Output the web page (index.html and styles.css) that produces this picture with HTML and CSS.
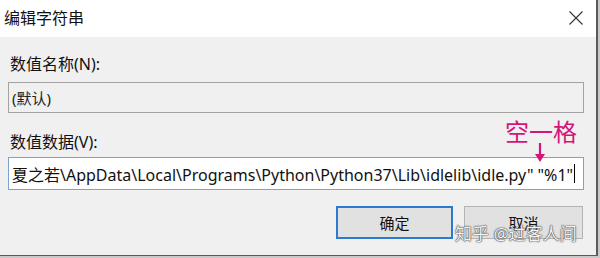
FILE: index.html
```html
<!DOCTYPE html>
<html lang="zh">
<head>
<meta charset="utf-8">
<title>编辑字符串</title>
<link rel="stylesheet" href="styles.css">
</head>
<body>
<div class="dialog">
  <div class="titlebar">
    <span class="title">编辑字符串</span>
    <svg class="close" width="14" height="14" viewBox="0 0 14 14"><path d="M0.5 0.5 L13.5 13.5 M13.5 0.5 L0.5 13.5" stroke="#333" stroke-width="1.1" fill="none"/></svg>
  </div>
  <div class="content">
    <div class="label label-name">数值名称(N):</div>
    <div class="field field-disabled">(默认)</div>
    <div class="label label-data">数值数据(V):</div>
    <div class="field field-active"><span class="value">夏之若\AppData\Local\Programs\Python\Python37\Lib\idlelib\idle.py" "%1"</span><span class="caret"></span></div>
    <div class="buttons">
      <div class="btn btn-ok">确定</div>
      <div class="btn btn-cancel">取消</div>
    </div>
  </div>
  <div class="note">
    <span class="note-text">空一格</span>
    <svg class="note-arrow" width="12" height="20" viewBox="0 0 12 20"><path d="M6 0 V13" stroke="#d4157a" stroke-width="2.2"/><path d="M1 11 L6 19 L11 11 Z" fill="#d4157a"/></svg>
  </div>
  <div class="watermark">知乎 @过客人间</div>
</div>
</body>
</html>
```
FILE: styles.css
```css
html, body {
  margin: 0;
  padding: 0;
  background: #c9c9c9;
}
body {
  width: 600px;
  height: 258px;
  overflow: hidden;
  font-family: "Noto Sans", "Noto Sans CJK SC", sans-serif;
  color: #000;
}
.dialog {
  position: relative;
  width: 596px;
  height: 255px;
  border-right: 2px solid #5a5a5a;
  border-bottom: 1px solid #5a5a5a;
  background: #f0f0f0;
  display: flex;
  flex-direction: column;
}
.titlebar {
  height: 37px;
  background: #fff;
  display: flex;
  align-items: center;
  justify-content: space-between;
  padding: 0 13px 0 4px;
  flex: none;
}
.title {
  font-size: 16px;
  margin-top: -3px;
  color: #111;
}
.close {
  margin-top: -1px;
}
.content {
  padding: 0 12px 0 8px;
  display: flex;
  flex-direction: column;
}
.label {
  font-size: 16px;
  padding-left: 2px;
  line-height: 22px;
  color: #111;
}
.label-name {
  margin-top: 16px;
}
.field {
  box-sizing: border-box;
  width: 576px;
  font-size: 16px;
  display: flex;
  align-items: center;
  padding-left: 3px;
}
.field-disabled {
  height: 31px;
  margin-top: 7px;
  font-size: 15px;
  border: 1px solid #a3a3a3;
  background: #f0f0f0;
  color: #222;
}
.label-data {
  margin-top: 18px;
}
.field-active {
  height: 33px;
  margin-top: 4px;
  border: 1px solid #7da2ce;
  background: #fff;
  color: #111;
  white-space: nowrap;
}
.caret {
  width: 1px;
  height: 19px;
  background: #000;
  margin-left: 1px;
}
.buttons {
  display: flex;
  gap: 11px;
  padding-left: 328px;
  margin-top: 16px;
}
.btn {
  box-sizing: border-box;
  height: 33px;
  background: #e1e1e1;
  font-size: 15px;
  display: flex;
  align-items: center;
  justify-content: center;
  color: #111;
}
.btn-ok {
  width: 117px;
  border: 2px solid #2a7ad1;
}
.btn-cancel {
  width: 119px;
  border: 1px solid #b4b4b4;
}
.note {
  position: absolute;
  left: 504px;
  top: 117px;
  display: flex;
  flex-direction: column;
  align-items: center;
  width: 74px;
}
.note-text {
  font-size: 24px;
  line-height: 30px;
  color: #d4157a;
}
.note-arrow {
  margin-top: -4px;
  margin-left: -2px;
}
.watermark {
  position: absolute;
  left: 455px;
  top: 224px;
  font-size: 17px;
  line-height: 20px;
  color: rgba(255,255,255,0.95);
  text-shadow: 0 0 1px #444, 0 0 1px #444, 0 0 2px #777;
  white-space: nowrap;
}
```
